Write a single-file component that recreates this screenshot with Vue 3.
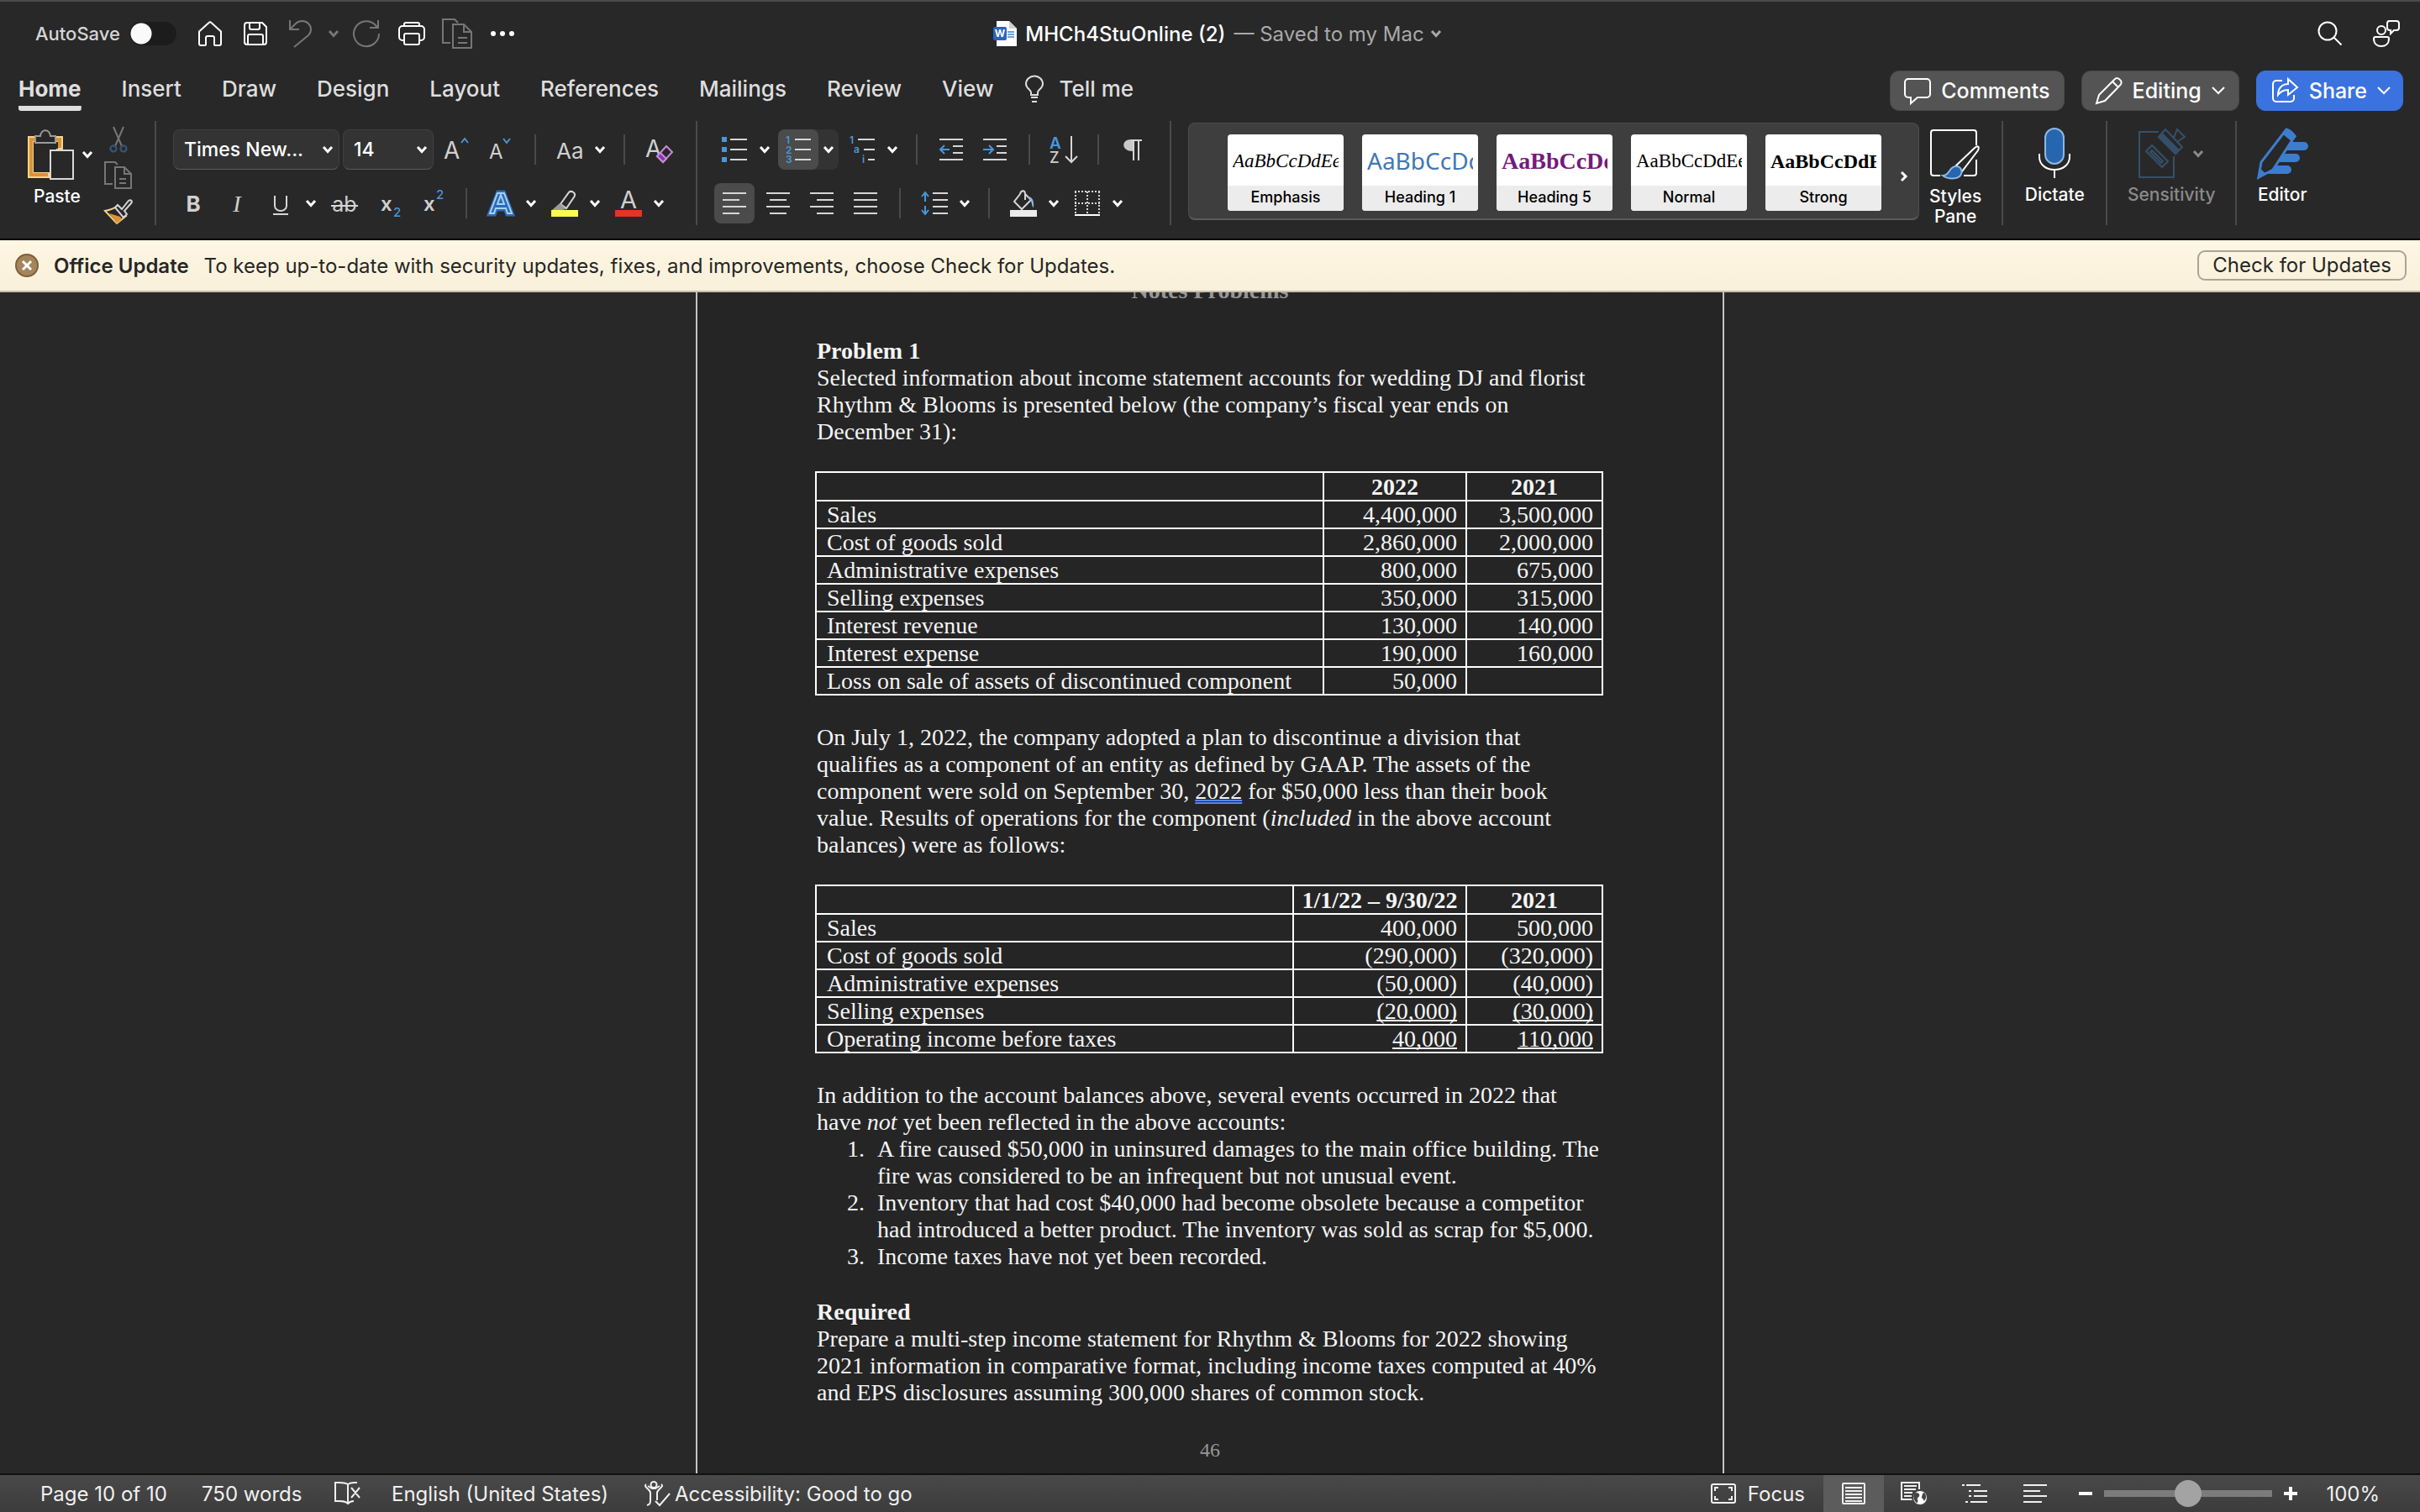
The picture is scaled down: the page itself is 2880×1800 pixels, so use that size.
<script setup>
import { h, ref } from 'vue'

const lines = (rows) =>
  rows.map(([x1, x2, y]) => `<path d="M${x1} ${y}H${x2}"/>`).join('')

const icons = {
  home: [28, 30, '<path d="M1 12.5 12.6 1.9a2 2 0 0 1 2.8 0L27 12.5V27a2 2 0 0 1-2 2h-5a1 1 0 0 1-1-1v-8a2 2 0 0 0-2-2h-6a2 2 0 0 0-2 2v8a1 1 0 0 1-1 1H3a2 2 0 0 1-2-2z"/>'],
  save: [28, 28, '<path d="M4 1h18l5 5v18a3 3 0 0 1-3 3H4a3 3 0 0 1-3-3V4a3 3 0 0 1 3-3zM7 1v6a2 2 0 0 0 2 2h8a2 2 0 0 0 2-2V1M5 27V17a2 2 0 0 1 2-2h14a2 2 0 0 1 2 2v10"/>'],
  undo: [28, 32, '<path d="M1 0v11h11M2 10l6-6c4-4 11-4 15 0s4 10 0 14L6 32"/>'],
  redo: [32, 32, '<path d="M31 16A15 15 0 1 1 26 5l3.500 4M20 9h10V0"/>'],
  print: [32, 28, '<path d="M7 5V3a2 2 0 0 1 2-2h14a2 2 0 0 1 2 2v2M7 22H5a4 4 0 0 1-4-4V9a4 4 0 0 1 4-4h22a4 4 0 0 1 4 4v9a4 4 0 0 1-4 4h-2M9 14h14a2 2 0 0 1 2 2v9a2 2 0 0 1-2 2H9a2 2 0 0 1-2-2v-9a2 2 0 0 1 2-2z"/>'],
  copyPage: [36, 36, '<path d="M10 29H1V1h14l4 4M13 7h13l9 9v19H13zM26 7v9h9M19 23h11M19 29h11"/>'],
  dots: [28, 8, '<g fill="currentColor" stroke="none"><circle cx="3" cy="4" r="3"/><circle cx="14" cy="4" r="3"/><circle cx="25" cy="4" r="3"/></g>'],
  chevron: [14, 10, '<path stroke-width="3" d="m2 2 5 5.500L12 2"/>'],
  chevronThin: [16, 10, '<path d="m1 1 7 7 7-7"/>'],
  chevronRight: [10, 14, '<path stroke-width="3" d="m2 2 5 5-5 5"/>'],
  search: [30, 30, '<circle cx="12" cy="12" r="10.500"/><path d="m19.500 19.500 9 9"/>'],
  presence: [32, 32, '<circle cx="10" cy="12" r="5"/><path d="M3 20h14a2 2 0 0 1 2 2c0 6-4 9-9 9s-9-3-9-9a2 2 0 0 1 2-2zM19 1h9a3 3 0 0 1 3 3v5a3 3 0 0 1-3 3h-3l-4 4v-4h-1a3 3 0 0 1-3-3V4a3 3 0 0 1 2-3z"/>'],
  word: [28, 30, '<path fill="#fff" stroke="none" d="M4 0h15l9 9v21H4z"/><path fill="#d0d0d0" stroke="none" d="M19 0v9h9z"/><path stroke="#3b82d6" d="M17 13h8M17 16h8M17 19h8" stroke-width="1.500"/><rect x="0" y="7" width="16" height="16" rx="2" fill="#2b63bd" stroke="none"/><text x="8" y="19" font-size="12" font-weight="700" text-anchor="middle" fill="#fff" stroke="none">W</text>'],
  bulb: [22, 32, '<path d="M7 23v-3c0-3-6-5-6-10a10 9.500 0 0 1 20 0c0 5-6 7-6 10v3zM7 26h8M8 31h6"/>'],
  comment: [32, 32, '<path d="M5 2h22a4 4 0 0 1 4 4v14a4 4 0 0 1-4 4H16l-8 7v-7H5a4 4 0 0 1-4-4V6a4 4 0 0 1 4-4z"/>'],
  pencil: [32, 32, '<path d="m1 31 3-10L22 3c2-2.500 4-2.500 6.500-.5s3 4.500.5 7L11 28zM20 5l7 7"/>'],
  share: [32, 30, '<path d="M12 3H5a4 4 0 0 0-4 4v17a4 4 0 0 0 4 4h17a4 4 0 0 0 4-4v-4M19 1l11 10-11 9v-6c-6 0-9 2-12 6 0-8 5-13 12-13z"/>'],

  paste: [56, 60, '<path fill="#dc9337" stroke="#f5d48b" d="M1 9h40v14h-6v-8H7v36h18v6H1z"/><path fill="#282828" stroke="none" d="M7 15h29v8h-9v28H7z"/><path fill="#282828" stroke="#9a9a9a" d="M9 16V8h6c1-9 11-9 12 0h6v8z"/><path fill="#282828" stroke="#d8d8d8" d="M27 25h27v34H27z"/>'],
  cut: [22, 32, '<g stroke="#767676"><path d="M5 1l10 23M17 1 7 24"/></g><g stroke="#36526f" stroke-width="2.500"><circle cx="5" cy="27" r="3.500"/><circle cx="17" cy="27" r="3.500"/></g>'],
  copy: [34, 34, '<path d="M10 27H1V1h12l3 3M13 7h11l8 8v17H13zM24 7v8h8M18 21h8M18 26h8"/>'],
  brush: [34, 32, '<path fill="#282828" stroke="#f5d48b" d="M16 9 26 21 15 30 1 15c6-1 10-2 15-6z"/><path fill="#dc9337" stroke="none" d="M6 18l13 4 2 3-6 5z"/><path fill="#282828" stroke="#d4d4d4" d="m16 8 5 5 8-10c3-2 5 1 3 3l-8 9 3 4-4 4L13 11z"/>'],

  fontUp: [32, 32, '<text x="0" y="27" font-size="28" fill="#d0d0d0" stroke="none">A</text><path stroke="#4b96d8" d="m21 8 4-5 4 5"/>'],
  fontDown: [32, 32, '<text x="2" y="27" font-size="24" fill="#d0d0d0" stroke="none">A</text><path stroke="#4b96d8" d="m19 3 4 5 4-5"/>'],
  caseAa: [34, 32, '<text x="1" y="27" font-size="26" fill="#d0d0d0" stroke="none">Aa</text>'],
  clearFormat: [34, 34, '<text x="1" y="26" font-size="28" fill="#d0d0d0" stroke="none">A</text><path fill="#282828" stroke="#c78ad8" d="M15 25 26 13l7 7-11 12z"/><path fill="#8a35a5" stroke="#c78ad8" d="m15 25 4-4 7 7-4 4z"/>'],
  bold: [24, 32, '<text x="12" y="26" font-size="26" font-weight="700" text-anchor="middle" fill="#d0d0d0" stroke="none">B</text>'],
  italic: [24, 32, '<text class="serif" x="12" y="26" font-size="28" font-style="italic" text-anchor="middle" fill="#d0d0d0" stroke="none">I</text>'],
  underline: [24, 32, '<path d="M5 7v12a7 6 0 0 0 14 0V7M3 29h18"/>'],
  strike: [34, 32, '<text x="17" y="26" font-size="25" text-anchor="middle" fill="#d0d0d0" stroke="none">ab</text><path d="M1 19h32"/>'],
  subscript: [30, 32, '<text x="6" y="25" font-size="24" font-weight="600" fill="#d0d0d0" stroke="none">x</text><text x="21" y="32" font-size="15" font-weight="500" fill="#4b96d8" stroke="none">2</text>'],
  superscript: [30, 32, '<text x="5" y="25" font-size="24" font-weight="600" fill="#d0d0d0" stroke="none">x</text><text x="20" y="11" font-size="15" font-weight="500" fill="#4b96d8" stroke="none">2</text>'],
  textEffect: [34, 32, '<g stroke-linejoin="miter"><path fill="#2b6cb8" stroke="#2b6cb8" stroke-width="3" d="M13 2h8l11 28h-8l-2-6H12l-2 6H2z"/><path fill="none" stroke="#a5d0f5" stroke-width="2" d="M13 4h8l9 24h-5l-2-6H11l-2 6H4zM13 17h8l-4-11z"/></g>'],
  highlight: [34, 32, '<path d="M12 17 22 3c2-2 4-1 5.500 0s2 3 1 5L19 22z"/><path fill="#9a9a9a" stroke="none" d="m11 16 8 7-5 1H2z"/><path fill="#fffb54" stroke="none" d="M1 24h32v8H1z"/>'],
  fontColor: [34, 32, '<text x="17" y="22" font-size="29" text-anchor="middle" fill="#d0d0d0" stroke="none">A</text><path fill="#e63323" stroke="none" d="M1 24h32v8H1z"/>'],

  bullets: [30, 30, '<g fill="#4b96d8" stroke="none"><path d="M0 0h6v6H0zM0 12h6v6H0zM0 24h6v6H0z"/></g>' + lines([[10, 30, 3], [10, 30, 15], [10, 30, 27]])],
  numbers: [30, 32, '<g fill="#4b96d8" stroke="none" font-size="12" font-weight="600"><text x="0" y="9">1</text><text x="0" y="21">2</text><text x="0" y="32">3</text></g>' + lines([[11, 30, 4], [11, 30, 16], [11, 30, 28]])],
  multilevel: [30, 32, '<g fill="#4b96d8" stroke="none" font-size="12" font-weight="600"><text x="0" y="9">1</text><text x="5" y="20">a</text><text x="15" y="32">i</text></g>' + lines([[10, 30, 4], [17, 30, 16], [22, 30, 28]])],
  outdent: [28, 28, lines([[0, 28, 2], [16, 28, 10], [16, 28, 18], [0, 28, 26]]) + '<path stroke="#4b96d8" d="M12 14H1M6 9l-5 5 5 5"/>'],
  indent: [28, 28, lines([[0, 28, 2], [16, 28, 10], [16, 28, 18], [0, 28, 26]]) + '<path stroke="#4b96d8" d="M0 14h11M7 9l5 5-5 5"/>'],
  sort: [34, 34, '<text x="0" y="16" font-size="19" font-weight="600" fill="#4b96d8" stroke="none">A</text><text x="0" y="33" font-size="18" font-weight="500" fill="#d0d0d0" stroke="none">Z</text><path d="M26 1v30M19 25l7 7 7-7"/>'],
  pilcrow: [22, 26, '<path fill="#c8c8c8" stroke="none" d="M11 1v14C-3 15-3 1 9 1z"/><path d="M9 2h13M12 2v24M18 2v24"/>'],
  left: [28, 28, lines([[0, 28, 2], [0, 20, 10], [0, 28, 18], [0, 20, 26]])],
  center: [28, 28, lines([[0, 28, 2], [4, 24, 10], [0, 28, 18], [4, 24, 26]])],
  right: [28, 28, lines([[0, 28, 2], [8, 28, 10], [0, 28, 18], [8, 28, 26]])],
  justify: [28, 28, lines([[0, 28, 2], [0, 28, 10], [0, 28, 18], [0, 28, 26]])],
  spacing: [32, 28, lines([[14, 32, 2], [14, 32, 10], [14, 32, 18], [14, 32, 26]]) + '<path stroke="#4b96d8" d="M5 12V2M1 6l4-5 4 5M5 17v10M1 22l4 5 4-5"/>'],
  bucket: [34, 32, '<path d="M13 5 6 14l9 9 11-11-7-7v7M13 5c1-5 6-5 6 0"/><path fill="#8ab8e6" stroke="none" d="M22 8c5 0 8 4 7 13-2-1-2-5-3-8z"/><path fill="#ececec" stroke="none" d="M1 24h32v8H1z"/>'],
  borders: [30, 32, '<path stroke-dasharray="2 2" d="M0 2h30M1 2v26M29 2v26M15 2v26M0 16h30"/><path stroke="#fff" d="M0 30h30"/>'],

  stylesPane: [60, 62, '<path d="M55 19V4a3 3 0 0 0-3-3H4a3 3 0 0 0-3 3v48a3 3 0 0 0 3 3h8M55 36v16a3 3 0 0 1-3 3H40"/><path d="M31 43 53 22c4-3 6-2 4 3L38 50z"/><path fill="#2766ae" stroke="#8ab8e6" d="M15 55c9 0 7-11 16-11 6 0 9 7 4 12-5 4-15 3-20-1z"/>'],
  mic: [38, 62, '<rect x="8" y="1" width="22" height="42" rx="11" fill="#2766ae" stroke="#8ab8e6"/><path d="M1 31v4c0 9 8 15 18 15s18-6 18-15v-4M19 50v10"/>'],
  sensitivity: [56, 62, '<g stroke="#36506a"><path d="M24 5H1v54h41V34"/><path d="M16 21 35 40l-7 7L9 28zM16 27l13 13-2 2-13-13z"/><path d="M32 2 52 23l-8 8L24 11zM42 12l4-10 9 9-8 5"/><path fill="#36506a" d="m24 11 4-4 20 20-4 4z"/></g>'],
  editor: [62, 62, '<g fill="#3c7dce" stroke="none"><path d="M40 17h17a5 5 0 0 1 0 10H33zM31 31h16a5 5 0 0 1 0 10H24zM22 45h15a5 5 0 0 1 0 10H14z"/><path fill="#282828" stroke="#3c7dce" stroke-width="3" d="M36 2c4 1 7 4 10 8L20 50 3 59 6 41z"/><path d="m36 1 12 9-5 7-11-9zM1 62 4 48l8 7z"/></g>'],

  proof: [32, 28, '<path d="M16 3c-5-3-10-2-15-2v22c6 0 11-1 15 3 2-2 4-3 7-3M16 3v22M16 3c4-3 8-2 11-2M20 7l10 12M30 7 20 19"/>'],
  access: [32, 30, '<circle cx="12" cy="4.500" r="3.500"/><path d="M3 4c-4 3 5 6 5 10v8c0 4 0 6-4 7M21 4c4 3-5 6-5 10v9M5 6l5 3h4l5-3M14 24l5 5L31 15"/>'],
  focus: [30, 24, '<rect x="1" y="1" width="28" height="22" rx="2"/><path d="M5 9V5h4M21 5h4v4M25 15v4h-4M9 19H5v-4"/>'],
  printView: [28, 26, '<rect x="1" y="1" width="26" height="24" rx="1"/>' + lines([[4, 24, 6], [4, 24, 10], [4, 24, 14], [4, 24, 18], [4, 24, 22]])],
  webView: [32, 28, '<path d="M14 21H1V1h21v8"/>' + lines([[4, 19, 5], [4, 18, 9], [4, 14, 13], [4, 13, 17]]) + '<circle cx="23" cy="19" r="9" fill="#fff" stroke="#444"/><path fill="#444" stroke="none" d="M17 13c4 0 6 1 5 4s-3 1-2 4 0 4-1 4c-4-3-5-8-2-12zM28 13c-3 1-2 3-3 5s3 2 2 5c4-2 4-7 1-10z"/>'],
  outline: [30, 22, '<path d="M0 1h3M5 1h17M8 8h3M14 8h16M8 14h3M14 14h16M4 21h3M10 21h20"/>'],
  draft: [28, 22, lines([[0, 28, 1], [0, 20, 8], [0, 28, 14], [0, 22, 21]])],
  closeMark: [28, 28, '<circle cx="14" cy="14" r="13" fill="#a3845c" stroke="#7e6038"/><path stroke="#fff" stroke-width="3" d="m9 9 10 10M19 9 9 19"/>'],
}

const Icon = (props) => {
  const [w, ht, body] = icons[props.name]
  return h('svg', {
    viewBox: `0 0 ${w} ${ht}`,
    width: w,
    height: ht,
    fill: 'none',
    stroke: 'currentColor',
    'stroke-width': 2,
    'aria-hidden': 'true',
    innerHTML: body,
  })
}
Icon.props = ['name']

const autosave = ref(false)
const font = ref('Times New...')
const size = ref('14')
const zoom = ref(100)

const tabs = ['Home', 'Insert', 'Draw', 'Design', 'Layout', 'References', 'Mailings', 'Review', 'View']

const fontRow = [
  { icon: 'bold', label: 'Bold' },
  { icon: 'italic', label: 'Italic' },
  { icon: 'underline', label: 'Underline', menu: true },
  { icon: 'strike', label: 'Strikethrough' },
  { icon: 'subscript', label: 'Subscript' },
  { icon: 'superscript', label: 'Superscript' },
  { sep: true },
  { icon: 'textEffect', label: 'Text effects', menu: true },
  { icon: 'highlight', label: 'Highlight color', menu: true },
  { icon: 'fontColor', label: 'Font color', menu: true },
]
const sizeRow = [
  { icon: 'fontUp', label: 'Increase font size' },
  { icon: 'fontDown', label: 'Decrease font size' },
  { sep: true },
  { icon: 'caseAa', label: 'Change case', menu: true },
  { sep: true },
  { icon: 'clearFormat', label: 'Clear formatting' },
]
const paragraphRows = [
  [
    { icon: 'bullets', label: 'Bullets', menu: true },
    { icon: 'numbers', label: 'Numbering', menu: true, on: true },
    { icon: 'multilevel', label: 'Multilevel list', menu: true },
    { sep: true },
    { icon: 'outdent', label: 'Decrease indent' },
    { icon: 'indent', label: 'Increase indent' },
    { sep: true },
    { icon: 'sort', label: 'Sort' },
    { sep: true },
    { icon: 'pilcrow', label: 'Show formatting marks' },
  ],
  [
    { icon: 'left', label: 'Align left', on: true },
    { icon: 'center', label: 'Center' },
    { icon: 'right', label: 'Align right' },
    { icon: 'justify', label: 'Justify' },
    { sep: true },
    { icon: 'spacing', label: 'Line spacing', menu: true },
    { sep: true },
    { icon: 'bucket', label: 'Shading', menu: true },
    { icon: 'borders', label: 'Borders', menu: true },
  ],
]

const Tools = (props) =>
  props.items.map((t) =>
    t.sep
      ? h('span', { class: 'sep' })
      : h('span', { class: ['tool', { on: t.on }] }, [
          h('button', { type: 'button', class: 'tool-main', 'aria-label': t.label }, [h(Icon, { name: t.icon })]),
          t.menu
            ? h('button', { type: 'button', class: 'tool-menu', 'aria-label': t.label + ' options' }, [h(Icon, { name: 'chevron' })])
            : null,
        ]),
  )
Tools.props = ['items']

const styles = [
  { name: 'Emphasis', kind: 'emphasis' },
  { name: 'Heading 1', kind: 'heading1' },
  { name: 'Heading 5', kind: 'heading5' },
  { name: 'Normal', kind: 'normal' },
  { name: 'Strong', kind: 'strong' },
]

const accounts = [
  ['Sales', '4,400,000', '3,500,000'],
  ['Cost of goods sold', '2,860,000', '2,000,000'],
  ['Administrative expenses', '800,000', '675,000'],
  ['Selling expenses', '350,000', '315,000'],
  ['Interest revenue', '130,000', '140,000'],
  ['Interest expense', '190,000', '160,000'],
  ['Loss on sale of assets of discontinued component', '50,000', ''],
]
const operations = [
  { row: ['Sales', '400,000', '500,000'] },
  { row: ['Cost of goods sold', '(290,000)', '(320,000)'] },
  { row: ['Administrative expenses', '(50,000)', '(40,000)'] },
  { row: ['Selling expenses', '(20,000)', '(30,000)'], total: true },
  { row: ['Operating income before taxes', '40,000', '110,000'], total: true },
]
</script>

<template>
  <div class="app">
    <header class="title-bar">
      <div class="quick">
        <label class="autosave">
          AutoSave
          <input v-model="autosave" type="checkbox" role="switch" />
        </label>
        <button type="button" class="plain q" aria-label="Home"><Icon name="home" /></button>
        <button type="button" class="plain q" aria-label="Save"><Icon name="save" /></button>
        <button type="button" class="plain q dim" aria-label="Undo"><Icon name="undo" /></button>
        <button type="button" class="plain q-menu dim" aria-label="Undo history"><Icon name="chevron" /></button>
        <button type="button" class="plain q dim" aria-label="Redo"><Icon name="redo" /></button>
        <button type="button" class="plain q" aria-label="Print"><Icon name="print" /></button>
        <button type="button" class="plain q dim" aria-label="Paste special"><Icon name="copyPage" /></button>
        <button type="button" class="plain q" aria-label="More"><Icon name="dots" /></button>
      </div>
      <div class="doc-title">
        <Icon name="word" />
        <h1>MHCh4StuOnline (2)</h1>
        <button type="button" class="plain saved">— Saved to my Mac <Icon name="chevron" /></button>
      </div>
      <div class="title-end">
        <button type="button" class="plain" aria-label="Search"><Icon name="search" /></button>
        <button type="button" class="plain" aria-label="Presence"><Icon name="presence" /></button>
      </div>
    </header>

    <nav class="tab-bar">
      <div class="tabs">
        <button v-for="(t, i) in tabs" :key="t" type="button" class="tab" :class="{ active: i === 0 }">{{ t }}</button>
        <button type="button" class="tab tell"><Icon name="bulb" />Tell me</button>
      </div>
      <div class="actions">
        <button type="button" class="action"><Icon name="comment" />Comments</button>
        <button type="button" class="action"><Icon name="pencil" />Editing<Icon name="chevronThin" /></button>
        <button type="button" class="action share"><Icon name="share" />Share<Icon name="chevronThin" /></button>
      </div>
    </nav>

    <section class="ribbon">
      <div class="clipboard">
        <button type="button" class="plain paste">
          <span class="paste-icons"><Icon name="paste" /><Icon name="chevron" /></span>
          <span class="paste-label">Paste</span>
        </button>
        <div class="clip-col">
          <button type="button" class="plain" aria-label="Cut"><Icon name="cut" /></button>
          <button type="button" class="plain dim" aria-label="Copy"><Icon name="copy" /></button>
          <button type="button" class="plain" aria-label="Format painter"><Icon name="brush" /></button>
        </div>
      </div>
      <div class="group">
        <div class="tool-row">
          <span class="picker font-picker">
            <select v-model="font" aria-label="Font"><option>Times New...</option></select>
            <Icon name="chevron" />
          </span>
          <span class="picker size-picker">
            <select v-model="size" aria-label="Font size"><option>14</option></select>
            <Icon name="chevron" />
          </span>
          <Tools :items="sizeRow" />
        </div>
        <div class="tool-row"><Tools :items="fontRow" /></div>
      </div>
      <div class="group">
        <div v-for="(row, i) in paragraphRows" :key="i" class="tool-row"><Tools :items="row" /></div>
      </div>
      <div class="group styles-group">
        <div class="gallery">
          <button v-for="s in styles" :key="s.name" type="button" class="style-card">
            <span class="sample" :class="s.kind">AaBbCcDdEe</span>
            <span class="style-name">{{ s.name }}</span>
          </button>
          <button type="button" class="plain next" aria-label="More styles"><Icon name="chevronRight" /></button>
        </div>
        <button type="button" class="plain big styles-pane"><Icon name="stylesPane" /><span>Styles<br />Pane</span></button>
      </div>
      <div class="group big-group">
        <button type="button" class="plain big"><Icon name="mic" /><span>Dictate</span></button>
      </div>
      <div class="group big-group sensitivity">
        <button type="button" class="plain big" disabled>
          <span class="with-menu"><Icon name="sensitivity" /><Icon name="chevron" /></span>
          <span>Sensitivity</span>
        </button>
      </div>
      <div class="group big-group editor">
        <button type="button" class="plain big"><Icon name="editor" /><span>Editor</span></button>
      </div>
    </section>

    <aside class="notice">
      <button type="button" class="plain" aria-label="Dismiss"><Icon name="closeMark" /></button>
      <strong>Office Update</strong>
      <span>To keep up-to-date with security updates, fixes, and improvements, choose Check for Updates.</span>
      <button type="button" class="check">Check for Updates</button>
    </aside>

    <main class="workspace">
      <article class="page">
        <p class="running-head">Notes Problems</p>
        <h2>Problem 1</h2>
        <p>Selected information about income statement accounts for wedding DJ and florist Rhythm &amp; Blooms is presented below (the company’s fiscal year ends on December 31):</p>

        <table>
          <colgroup><col class="c-wide" /><col class="c-mid" /><col class="c-end" /></colgroup>
          <thead><tr><th></th><th scope="col">2022</th><th scope="col">2021</th></tr></thead>
          <tbody>
            <tr v-for="r in accounts" :key="r[0]"><td>{{ r[0] }}</td><td class="num">{{ r[1] }}</td><td class="num">{{ r[2] }}</td></tr>
          </tbody>
        </table>

        <p>On July 1, 2022, the company adopted a plan to discontinue a division that qualifies as a component of an entity as defined by GAAP. The assets of the component were sold on September 30, <span class="grammar">2022</span> for $50,000 less than their book value. Results of operations for the component (<em>included</em> in the above account balances) were as follows:</p>

        <table>
          <colgroup><col class="c-wide2" /><col class="c-mid2" /><col class="c-end" /></colgroup>
          <thead><tr><th></th><th scope="col" class="period">1/1/22 – 9/30/22</th><th scope="col">2021</th></tr></thead>
          <tbody>
            <tr v-for="o in operations" :key="o.row[0]" :class="{ total: o.total }">
              <td>{{ o.row[0] }}</td>
              <td class="num"><span>{{ o.row[1] }}</span></td>
              <td class="num"><span>{{ o.row[2] }}</span></td>
            </tr>
          </tbody>
        </table>

        <p>In addition to the account balances above, several events occurred in 2022 that have <em>not</em> yet been reflected in the above accounts:</p>
        <ol>
          <li>A fire caused $50,000 in uninsured damages to the main office building. The fire was considered to be an infrequent but not unusual event.</li>
          <li>Inventory that had cost $40,000 had become obsolete because a competitor had introduced a better product. The inventory was sold as scrap for $5,000.</li>
          <li>Income taxes have not yet been recorded.</li>
        </ol>

        <h2>Required</h2>
        <p>Prepare a multi-step income statement for Rhythm &amp; Blooms for 2022 showing 2021 information in comparative format, including income taxes computed at 40% and EPS disclosures assuming 300,000 shares of common stock.</p>
        <p class="folio">46</p>
      </article>
    </main>

    <footer class="status">
      <span class="s-page">Page 10 of 10</span>
      <span class="s-words">750 words</span>
      <button type="button" class="plain" aria-label="Proofing"><Icon name="proof" /></button>
      <span class="s-lang">English (United States)</span>
      <button type="button" class="plain s-access"><Icon name="access" />Accessibility: Good to go</button>
      <div class="views">
        <button type="button" class="plain focus"><Icon name="focus" />Focus</button>
        <button type="button" class="plain view on" aria-label="Print layout"><Icon name="printView" /></button>
        <button type="button" class="plain view" aria-label="Web layout"><Icon name="webView" /></button>
        <button type="button" class="plain view" aria-label="Outline"><Icon name="outline" /></button>
        <button type="button" class="plain view" aria-label="Draft"><Icon name="draft" /></button>
        <button type="button" class="plain step minus" aria-label="Zoom out"></button>
        <input v-model="zoom" class="zoom" type="range" min="0" max="200" aria-label="Zoom" />
        <button type="button" class="plain step plus" aria-label="Zoom in"></button>
        <output class="percent">{{ zoom }}%</output>
      </div>
    </footer>
  </div>
</template>

<style>
body {
  background: #282828;
}

svg {
  overflow: visible;
}

svg text {
  font-family: Inter, sans-serif;
}

svg text.serif {
  font-family: "Liberation Serif", serif;
}

.sep {
  width: 2px;
  height: 36px;
  margin: 0 12px;
  background: #4a4a4a;
}

.tool {
  display: flex;
  border-radius: 8px;
}

.tool-main,
.tool-menu {
  display: flex;
  align-items: center;
  justify-content: center;
  height: 48px;
  padding: 0;
  border: 0;
  border-radius: inherit;
  background: none;
  color: #d6d6d6;
}

.tool-main {
  width: 48px;
}

.tool-menu {
  width: 24px;
  color: #fff;
}

.tool.on {
  background: #333;
}

.tool.on .tool-main {
  background: #4b4b4b;
}
</style>

<style scoped>
.app {
  display: flex;
  flex-direction: column;
  height: 100vh;
  overflow: hidden;
  background: #282828;
  color: #fff;
  font-family: Inter, sans-serif;
  font-size: 24px;
}

svg {
  flex: none;
}

button,
select {
  font: inherit;
  color: inherit;
}

.plain {
  display: flex;
  align-items: center;
  padding: 0;
  border: 0;
  background: none;
}

.dim {
  color: #767676;
}

.title-bar {
  display: grid;
  grid-template-columns: 1fr auto 1fr;
  align-items: center;
  height: 76px;
  padding: 0 24px 0 42px;
  border-top: 2px solid #4b4b4b;
}

.quick {
  display: flex;
  align-items: center;
}

.q {
  justify-content: center;
  width: 54px;
}

.q-menu {
  justify-content: center;
  width: 24px;
}

.autosave {
  display: flex;
  align-items: center;
  justify-content: space-between;
  width: 168px;
  margin-right: 13px;
  color: #d5d5d5;
  font-weight: 500;
  font-size: 22px;
}

.autosave input {
  appearance: none;
  width: 56px;
  height: 28px;
  margin: 0;
  border-radius: 14px;
  background: radial-gradient(circle at 14px 14px, #fafafa 12px, transparent 13px), #1c1c1c;
}

.doc-title {
  display: flex;
  align-items: center;
  gap: 10px;
}

h1 {
  margin: 0;
  font-size: 24px;
  font-weight: 500;
}

.saved {
  gap: 7px;
  color: #a9a9a9;
}

.title-end {
  display: flex;
  align-items: center;
  justify-content: flex-end;
  gap: 36px;
}

.tab-bar {
  display: flex;
  justify-content: space-between;
  height: 66px;
  padding: 0 20px 0 22px;
}

.tabs {
  display: flex;
  align-items: flex-start;
  gap: 48px;
  padding-top: 10px;
}

.tab {
  display: flex;
  align-items: center;
  height: 44px;
  padding: 2px 0 4px;
  border: 0;
  border-bottom: 6px solid transparent;
  background: none;
  color: #dedede;
  font-size: 26px;
  font-weight: 500;
  line-height: 32px;
}

.tab.active {
  border-radius: 3px;
  font-weight: 700;
  background: linear-gradient(#dedede, #dedede) bottom / 100% 6px no-repeat border-box;
}

.tell {
  gap: 18px;
  margin-left: -10px;
}

.actions {
  display: flex;
  align-items: flex-start;
  gap: 20px;
  padding-top: 6px;
}

.action {
  display: flex;
  align-items: center;
  gap: 12px;
  height: 48px;
  padding: 0 16px;
  border: 1px solid #484848;
  border-radius: 11px;
  background: #545454;
  font-size: 25px;
  font-weight: 500;
}

.share {
  padding: 0 14px 0 18px;
  border-color: #3a73e0;
  background: #3a73e0;
}

.ribbon {
  display: flex;
  padding-bottom: 16px;
  border-bottom: 2px solid #000;
}

.clipboard {
  box-sizing: border-box;
  display: flex;
  gap: 12px;
  width: 184px;
  height: 124px;
  padding-left: 33px;
}

.paste {
  flex-direction: column;
  align-items: flex-start;
  padding-top: 10px;
}

.paste-icons,
.with-menu {
  display: flex;
  align-items: center;
  gap: 8px;
}

.paste-label {
  padding: 8px 0 0 7px;
  font-size: 21px;
  font-weight: 500;
  line-height: 24px;
}

.clip-col {
  display: flex;
  flex-direction: column;
  align-items: center;
  justify-content: space-between;
  width: 36px;
  padding-top: 6px;
}

.group {
  display: flex;
  flex-direction: column;
  gap: 16px;
  height: 114px;
  padding: 10px 20px 0;
  border-left: 2px solid #4a4a4a;
}

.tool-row {
  display: flex;
  align-items: center;
  gap: 4px;
  height: 48px;
}

.picker {
  display: grid;
  align-items: center;
}

.picker > * {
  grid-area: 1 / 1;
}

.picker svg {
  justify-self: end;
  margin-right: 7px;
  pointer-events: none;
}

.picker select {
  appearance: none;
  width: 100%;
  height: 48px;
  padding: 0 12px;
  border: 1px solid #404040;
  border-bottom-color: #5a5a5a;
  border-radius: 8px;
  background: #333;
  color: #fff;
  font-size: 23px;
  font-weight: 500;
}

.font-picker {
  width: 198px;
}

.size-picker {
  width: 108px;
}

.styles-group {
  flex-direction: row;
  gap: 12px;
  height: 122px;
  padding: 2px 24px 0 20px;
}

.gallery {
  display: flex;
  align-items: flex-start;
  gap: 22px;
  height: 116px;
  padding: 13px 12px 0 46px;
  box-sizing: border-box;
  border: 1px solid #4c4c4c;
  border-bottom: 2px solid #5c5c5c;
  border-radius: 8px;
  background: #3e3e3e;
}

.style-card {
  display: flex;
  flex-direction: column;
  width: 138px;
  height: 91px;
  padding: 0;
  border: 0;
  border-radius: 4px;
  background: #fff;
  color: #000;
  overflow: hidden;
}

.sample {
  width: 126px;
  height: 61px;
  margin: 0 6px;
  overflow: hidden;
  text-align: left;
  font: 23px/64px "Liberation Serif", serif;
}

.emphasis {
  font-style: italic;
}

.heading1 {
  color: #3f78b5;
  font: 28px/62px "Noto Sans", sans-serif;
}

.heading5 {
  color: #741b7c;
  font-size: 28px;
  font-weight: 700;
}

.strong {
  font-size: 24px;
  font-weight: 700;
}

.style-name {
  width: 100%;
  height: 30px;
  background: #ececec;
  font-size: 18px;
  font-weight: 500;
  line-height: 28px;
}

.next {
  align-self: center;
}

.big {
  flex-direction: column;
  align-items: center;
  justify-content: flex-start;
  gap: 6px;
  font-size: 21px;
  font-weight: 500;
  line-height: 24px;
}

.styles-pane {
  padding-top: 8px;
}

.big-group {
  box-sizing: border-box;
  align-items: center;
  width: 124px;
  height: 124px;
  padding: 8px 0 0;
}

.sensitivity {
  width: 154px;
}

.editor {
  width: 110px;
}

.sensitivity .big {
  color: #8a8a8a;
}

.notice {
  display: flex;
  align-items: center;
  height: 60px;
  padding: 0 16px 0 18px;
  border-bottom: 2px solid #c5bfae;
  background: linear-gradient(#fff6e3, #f9f0da);
  color: #262626;
}

.notice strong {
  margin: 0 18px;
  font-weight: 600;
}

.check {
  height: 36px;
  margin-left: auto;
  padding: 0 16px;
  border: 2px solid #aaa496;
  border-radius: 9px;
  background: transparent;
  line-height: 32px;
}

.workspace {
  flex: 1;
  display: flex;
  justify-content: center;
  min-height: 0;
  overflow: hidden;
}

.page {
  box-sizing: border-box;
  width: 1224px;
  height: max-content;
  min-height: 100%;
  margin-top: -18px;
  padding: 0 142px 60px;
  border: solid #c4c4c4;
  border-width: 0 2px;
  background: #252525;
  color: #f4f4f4;
  font: 28px/32px "Liberation Serif", serif;
}

.page p {
  margin: 0;
}

.page .running-head {
  margin-bottom: 40px;
  color: #979797;
  font-weight: 700;
  text-align: center;
}

h2 {
  margin: 0;
  font-size: 28px;
  font-weight: 700;
}

table {
  width: 936px;
  margin: 31px 0 34px -2px;
  border-collapse: collapse;
  table-layout: fixed;
}

.c-wide {
  width: 604px;
}

.c-mid {
  width: 170px;
}

.c-wide2 {
  width: 568px;
}

.c-mid2 {
  width: 206px;
}

.c-end {
  width: 162px;
}

th,
td {
  padding: 0 11px 0 12px;
  border: 2px solid #fff;
  line-height: 31px;
}

th {
  height: 32px;
  padding: 0;
}

.num {
  padding: 0 10px 0 0;
  text-align: right;
}

.total span {
  text-decoration: underline 2px;
  text-decoration-skip-ink: none;
}

.grammar {
  text-decoration: underline double #5b86ee 2px;
  text-decoration-skip-ink: none;
}

ol {
  margin: 0 0 34px;
  padding-left: 64px;
}

li {
  padding-left: 8px;
}

.page .folio {
  margin-top: 36px;
  color: #979797;
  font-size: 24px;
  text-align: center;
}

.status {
  display: flex;
  align-items: center;
  height: 44px;
  padding: 0 48px;
  border-top: 2px solid #111;
  background: linear-gradient(#494949, #3c3c3c);
  color: #f0f0f0;
}

.s-page {
  width: 192px;
}

.s-words {
  width: 158px;
}

.s-lang {
  width: 300px;
  margin-left: 36px;
}

.s-access {
  gap: 5px;
}

.views {
  display: flex;
  align-items: center;
  height: 100%;
  margin-left: auto;
}

.focus {
  gap: 14px;
  margin-right: 22px;
}

.view {
  justify-content: center;
  width: 72px;
  height: 100%;
}

.view.on {
  background: #5c5c5c;
}

.step {
  width: 16px;
  height: 16px;
  margin: 0 14px;
}

.minus {
  margin-left: 16px;
  background: linear-gradient(#fff, #fff) center / 16px 4px no-repeat;
}

.plus {
  background: linear-gradient(#fff, #fff) center / 16px 4px no-repeat, linear-gradient(#fff, #fff) center / 4px 16px no-repeat;
}

.zoom {
  appearance: none;
  width: 200px;
  height: 32px;
  margin: 0;
  background: linear-gradient(#7c7c7c, #7c7c7c) center / 100% 8px no-repeat;
}

.zoom::-webkit-slider-thumb {
  appearance: none;
  width: 32px;
  height: 32px;
  border-radius: 50%;
  background: #a3a3a3;
}

.percent {
  width: 64px;
  margin-left: 20px;
  text-align: right;
}
</style>
